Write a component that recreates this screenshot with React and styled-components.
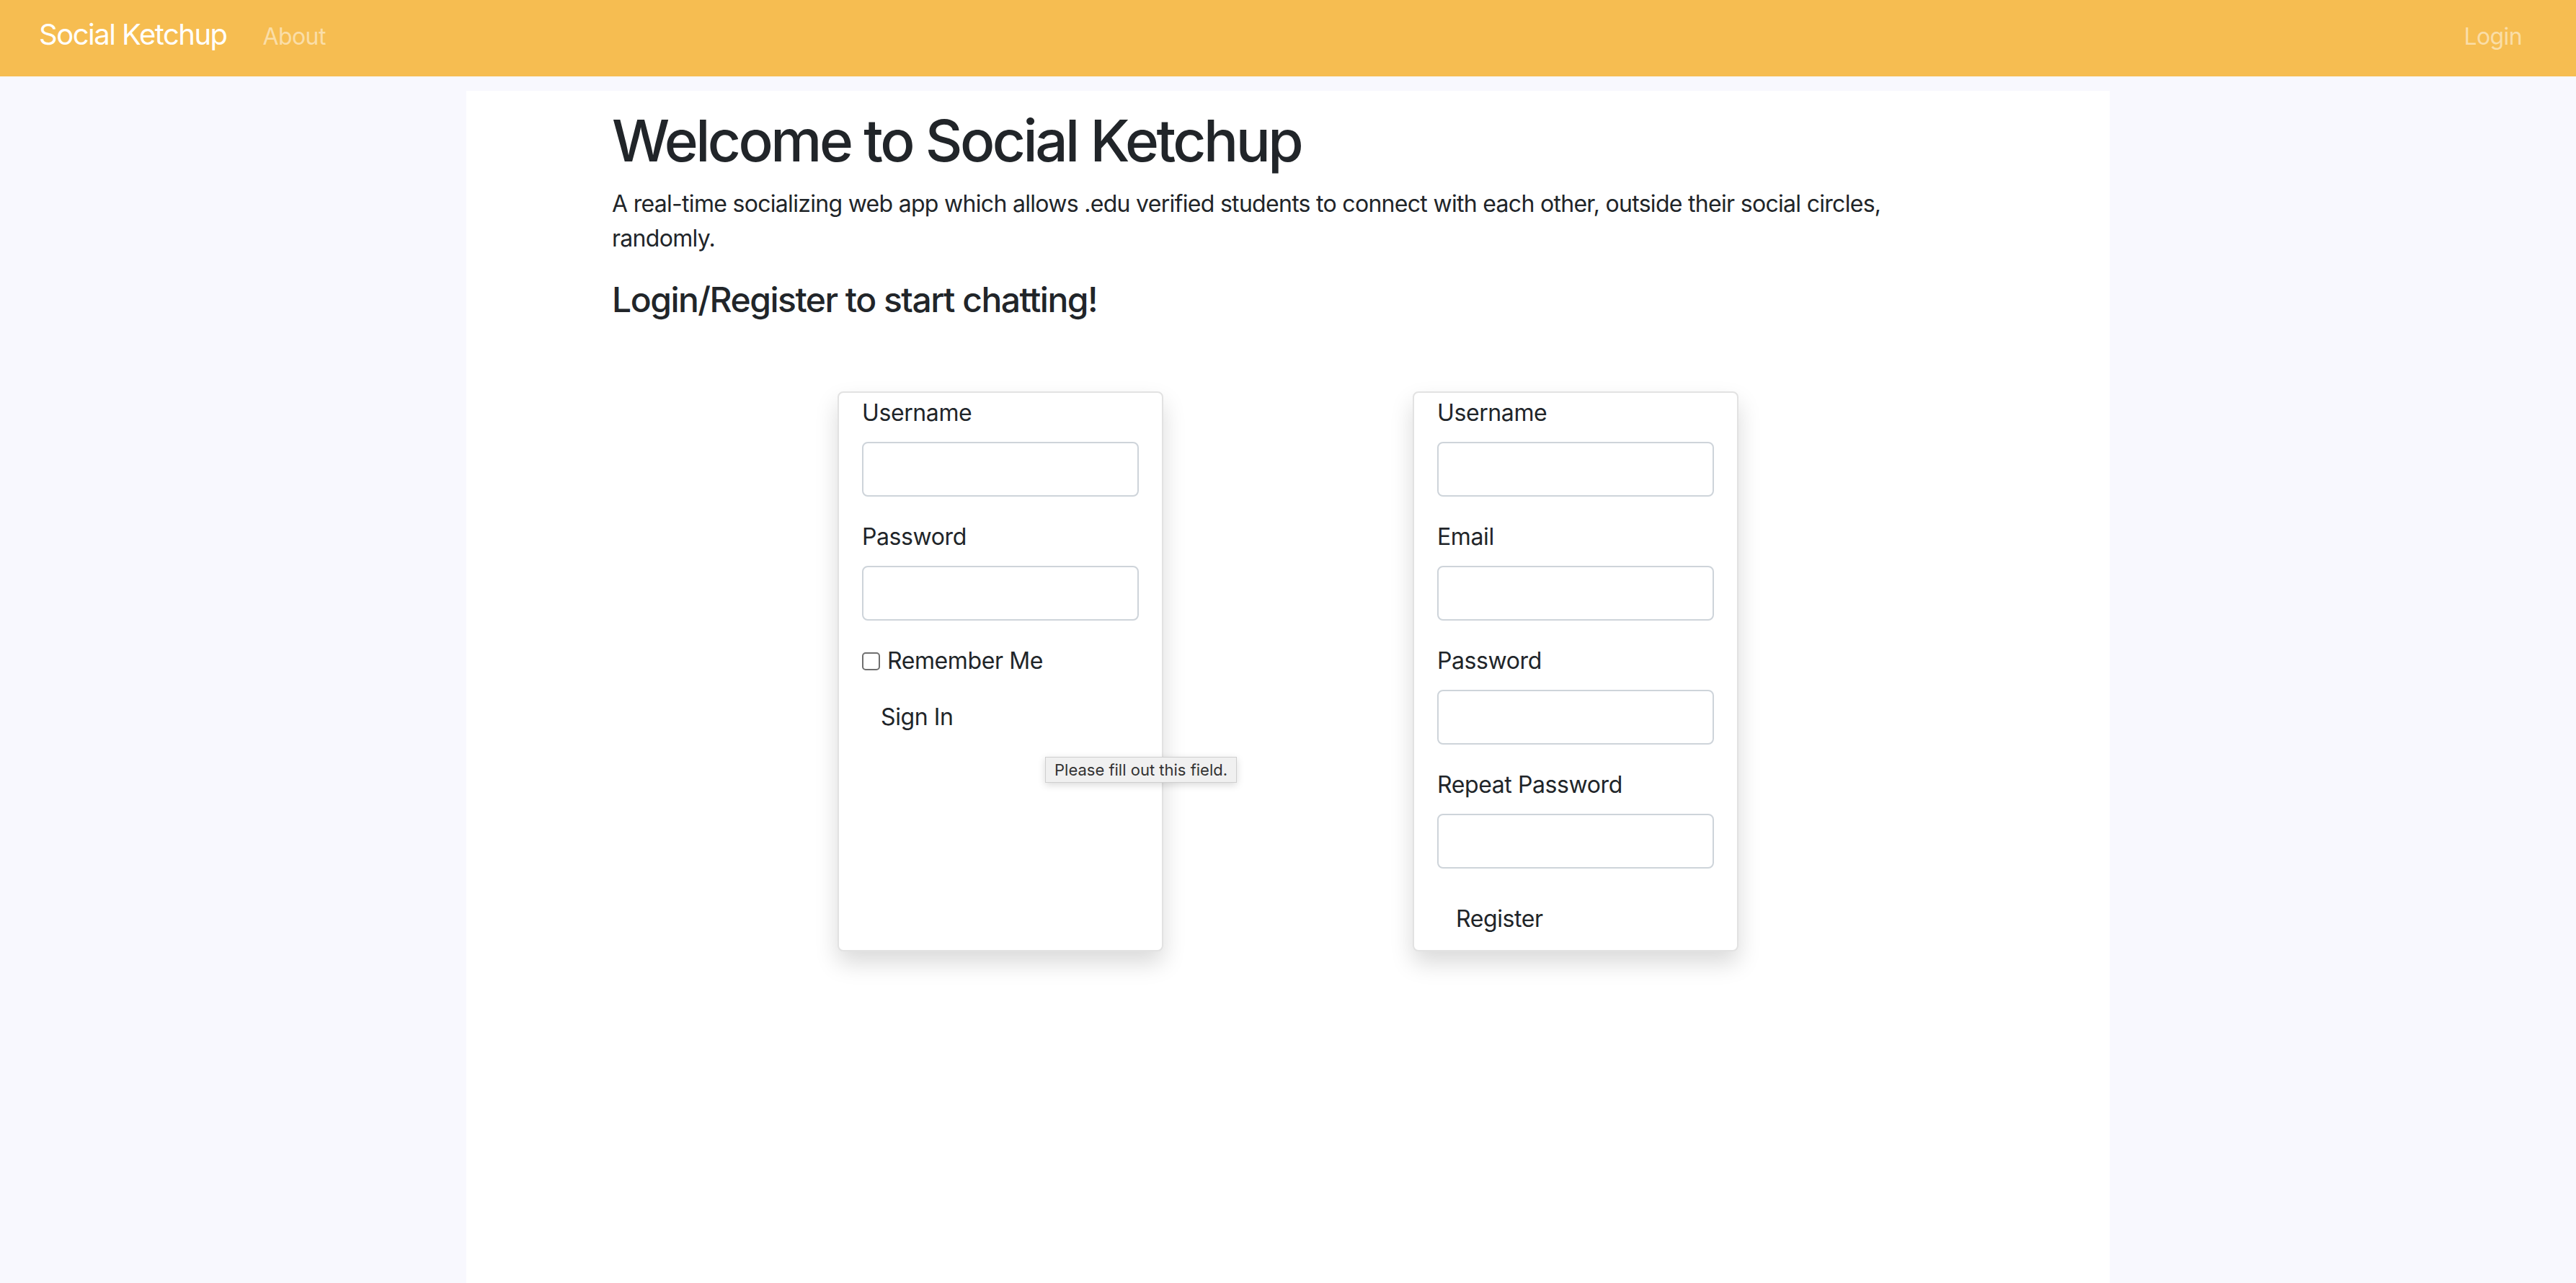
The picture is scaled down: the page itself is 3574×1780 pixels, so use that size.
import React from "react";
import styled, { createGlobalStyle } from "styled-components";

const GlobalStyle = createGlobalStyle`
  * {
    box-sizing: border-box;
  }

  body {
    margin: 0;
    background: #f8f8fe;
    font-family: Inter, "Noto Sans", "Liberation Sans", sans-serif;
    color: #212529;
  }
`;

const NavBar = styled.nav`
  display: flex;
  align-items: baseline;
  height: 106px;
  padding: 18px 59px 0 54px;
  background: #f6bd51;
`;

const Brand = styled.a`
  font-size: 40px;
  line-height: 60px;
  letter-spacing: -1.5px;
  color: #fff;
  text-decoration: none;
  margin-right: 34px;
`;

const NavLink = styled.a`
  font-size: 32px;
  line-height: 48px;
  letter-spacing: -0.6px;
  padding: 0 16px;
  color: rgba(255, 255, 255, 0.5);
  text-decoration: none;
`;

const Spacer = styled.div`
  flex: 1;
`;

const Container = styled.main`
  width: 2280px;
  min-height: calc(100vh - 126px);
  margin: 20px auto 0;
  padding: 21px 202px 0;
  background: #fff;
`;

const Title = styled.h1`
  margin: 0 0 16px;
  font-size: 80px;
  line-height: 96px;
  font-weight: 500;
  letter-spacing: -3.5px;
`;

const Lead = styled.p`
  margin: 0 0 32px;
  font-size: 32px;
  line-height: 48px;
  letter-spacing: -0.7px;
`;

const SubTitle = styled.h4`
  margin: 0;
  font-size: 48px;
  line-height: 58px;
  font-weight: 500;
  letter-spacing: -1.5px;
`;

const CardRow = styled.div`
  display: flex;
  justify-content: center;
  align-items: stretch;
  gap: 346px;
  margin-top: 98px;
`;

const Card = styled.form`
  position: relative;
  width: 452px;
  padding: 4px 32px 5px;
  background: #fff;
  border: 2px solid #e2e2e2;
  border-radius: 8px;
  box-shadow: 0 16px 32px rgba(0, 0, 0, 0.15);
`;

const Group = styled.div`
  margin-bottom: 32px;
`;

const Label = styled.label`
  display: block;
  margin-bottom: 16px;
  font-size: 32px;
  line-height: 48px;
  letter-spacing: -0.4px;
`;

const Input = styled.input`
  display: block;
  width: 100%;
  height: 76px;
  padding: 12px 24px;
  font-size: 32px;
  font-family: inherit;
  border: 2px solid #ced4da;
  border-radius: 8px;
  background: #fff;
  outline: none;
`;

const CheckRow = styled.label`
  display: flex;
  align-items: center;
  height: 48px;
  margin-top: 1px;
  margin-bottom: 16px;
  font-size: 32px;
  line-height: 48px;
  letter-spacing: -0.4px;
`;

const Check = styled.input`
  appearance: none;
  width: 25px;
  height: 25px;
  margin: 0 10px 0 0;
  border: 2px solid #6f6f6f;
  border-radius: 5px;
  background: #fff;
`;

const Button = styled.button`
  display: inline-block;
  padding: 12px 24px;
  font-family: inherit;
  font-size: 32px;
  line-height: 48px;
  letter-spacing: -0.4px;
  color: #212529;
  background: transparent;
  border: 2px solid transparent;
  border-radius: 8px;
`;

const Tooltip = styled.div`
  position: absolute;
  left: 286px;
  top: 505px;
  padding: 0 12px;
  height: 36px;
  font-size: 22px;
  line-height: 34px;
  color: #333;
  white-space: nowrap;
  background: #f0f0f0;
  border: 1px solid #cfcfcf;
  box-shadow: 0 3px 10px rgba(0, 0, 0, 0.15);
  z-index: 2;
`;

const Field = ({ label, type = "text" }) => (
  <Group>
    <Label>{label}</Label>
    <Input type={type} required />
  </Group>
);

const App = () => {
  return (
    <>
      <GlobalStyle />
      <NavBar>
        <Brand href="#">Social Ketchup</Brand>
        <NavLink href="#">About</NavLink>
        <Spacer />
        <NavLink href="#">Login</NavLink>
      </NavBar>
      <Container>
        <Title>Welcome to Social Ketchup</Title>
        <Lead>
          A real-time socializing web app which allows .edu verified students to connect with each
          other, outside their social circles, randomly.
        </Lead>
        <SubTitle>Login/Register to start chatting!</SubTitle>
        <CardRow>
          <Card>
            <Field label="Username" />
            <Field label="Password" type="password" />
            <CheckRow>
              <Check type="checkbox" />
              Remember Me
            </CheckRow>
            <Button type="button">Sign In</Button>
            <Tooltip>Please fill out this field.</Tooltip>
          </Card>
          <Card>
            <Field label="Username" />
            <Field label="Email" type="email" />
            <Field label="Password" type="password" />
            <Field label="Repeat Password" type="password" />
            <Button type="button">Register</Button>
          </Card>
        </CardRow>
      </Container>
    </>
  );
};

export default App;
